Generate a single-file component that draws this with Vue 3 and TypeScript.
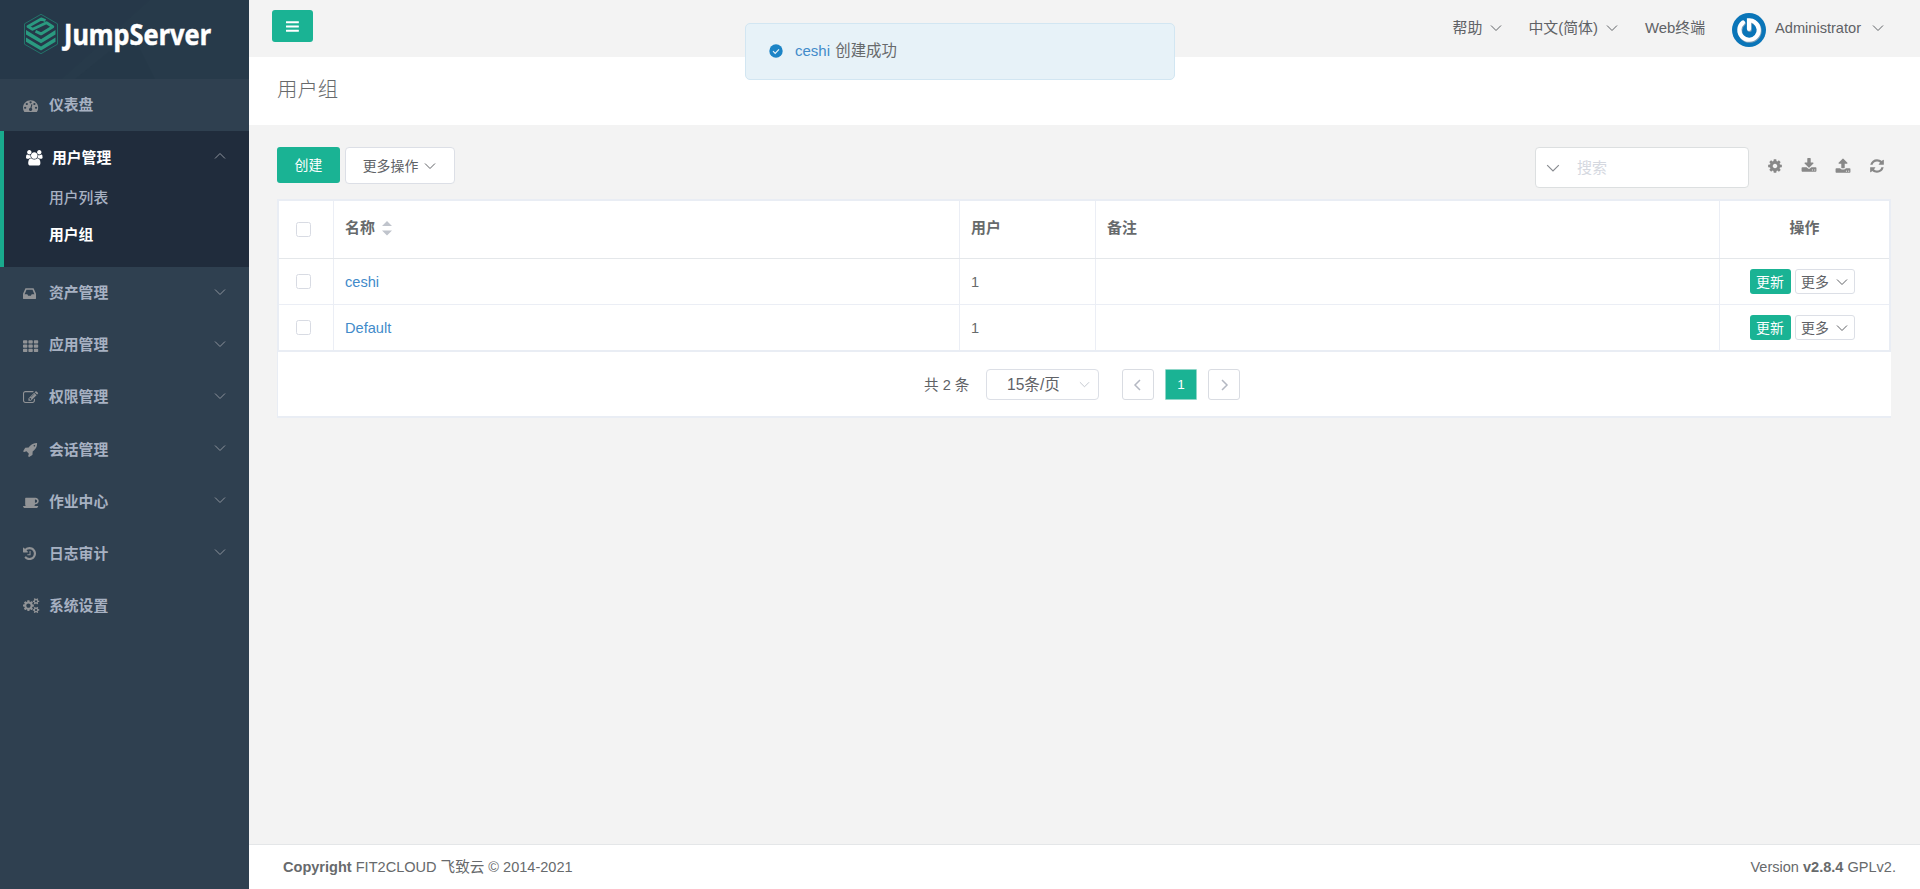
<script setup lang="ts">
import { h, type FunctionalComponent } from 'vue'

interface IconDef { w: number; d: string }
interface MenuItem { label: string; icon: string; expandable: boolean }
interface GroupRow { name: string; users: number; comment: string }

const icons: Record<string, IconDef> = {
  bars: { w: 1536, d: 'M1536 1344v128q0 26-19 45t-45 19h-1408q-26 0-45-19t-19-45v-128q0-26 19-45t45-19h1408q26 0 45 19t19 45zm0-512v128q0 26-19 45t-45 19h-1408q-26 0-45-19t-19-45v-128q0-26 19-45t45-19h1408q26 0 45 19t19 45zm0-512v128q0 26-19 45t-45 19h-1408q-26 0-45-19t-19-45v-128q0-26 19-45t45-19h1408q26 0 45 19t19 45z' },
  dashboard: { w: 1792, d: 'M384 1152q0-53-37.5-90.5t-90.5-37.5-90.5 37.5-37.5 90.5 37.5 90.5 90.5 37.5 90.5-37.5 37.5-90.5zm192-448q0-53-37.5-90.5t-90.5-37.5-90.5 37.5-37.5 90.5 37.5 90.5 90.5 37.5 90.5-37.5 37.5-90.5zm428 481l101-382q6-26-7.5-48.5t-38.5-29.5-48 6.5-30 39.5l-101 382q-60 5-107 43.5t-63 98.5q-20 77 20 146t117 89 146-20 89-117q16-60-6-117t-72-91zm660-33q0-53-37.5-90.5t-90.5-37.5-90.5 37.5-37.5 90.5 37.5 90.5 90.5 37.5 90.5-37.5 37.5-90.5zm-640-640q0-53-37.5-90.5t-90.5-37.5-90.5 37.5-37.5 90.5 37.5 90.5 90.5 37.5 90.5-37.5 37.5-90.5zm448 192q0-53-37.5-90.5t-90.5-37.5-90.5 37.5-37.5 90.5 37.5 90.5 90.5 37.5 90.5-37.5 37.5-90.5zm320 448q0 261-141 483-19 29-54 29h-1402q-35 0-54-29-141-221-141-483 0-182 71-348t191-286 286-191 348-71 348 71 286 191 191 286 71 348z' },
  users: { w: 1920, d: 'M593 896q-162 5-265 128h-134q-82 0-138-40.5t-56-118.5q0-353 124-353 6 0 43.5 21t97.5 42.5 119 21.5q67 0 133-23-5 37-5 66 0 139 81 256zm1071 637q0 120-73 189.5t-194 69.5h-874q-121 0-194-69.5t-73-189.5q0-53 3.5-103.5t14-109 26.5-108.5 43-97.5 62-81 85.5-53.5 111.5-20q10 0 43 21.5t73 48 107 48 135 21.5 135-21.5 107-48 73-48 43-21.5q61 0 111.5 20t85.5 53.5 62 81 43 97.5 26.5 108.5 14 109 3.5 103.5zm-1024-1277q0 106-75 181t-181 75-181-75-75-181 75-181 181-75 181 75 75 181zm704 384q0 159-112.5 271.5t-271.5 112.5-271.5-112.5-112.5-271.5 112.5-271.5 271.5-112.5 271.5 112.5 112.5 271.5zm576 225q0 78-56 118.5t-138 40.5h-134q-103-123-265-128 81-117 81-256 0-29-5-66 66 23 133 23 59 0 119-21.5t97.5-42.5 43.5-21q124 0 124 353zm-128-609q0 106-75 181t-181 75-181-75-75-181 75-181 181-75 181 75 75 181z' },
  inbox: { w: 1536, d: 'M1023 960h316q-1-3-2.5-8.5t-2.5-7.5l-212-496h-708l-212 496q-1 3-2.5 8.5t-2.5 7.5h316l95 192h320zm513 30v482q0 26-19 45t-45 19h-1408q-26 0-45-19t-19-45v-482q0-62 25-123l238-552q10-25 36.5-42t52.5-17h832q26 0 52.5 17t36.5 42l238 552q25 61 25 123z' },
  th: { w: 1792, d: 'M512 1376v192q0 40-28 68t-68 28h-320q-40 0-68-28t-28-68v-192q0-40 28-68t68-28h320q40 0 68 28t28 68zm0-512v192q0 40-28 68t-68 28h-320q-40 0-68-28t-28-68v-192q0-40 28-68t68-28h320q40 0 68 28t28 68zm640 512v192q0 40-28 68t-68 28h-320q-40 0-68-28t-28-68v-192q0-40 28-68t68-28h320q40 0 68 28t28 68zm-640-1024v192q0 40-28 68t-68 28h-320q-40 0-68-28t-28-68v-192q0-40 28-68t68-28h320q40 0 68 28t28 68zm640 512v192q0 40-28 68t-68 28h-320q-40 0-68-28t-28-68v-192q0-40 28-68t68-28h320q40 0 68 28t28 68zm640 512v192q0 40-28 68t-68 28h-320q-40 0-68-28t-28-68v-192q0-40 28-68t68-28h320q40 0 68 28t28 68zm-640-1024v192q0 40-28 68t-68 28h-320q-40 0-68-28t-28-68v-192q0-40 28-68t68-28h320q40 0 68 28t28 68zm640 512v192q0 40-28 68t-68 28h-320q-40 0-68-28t-28-68v-192q0-40 28-68t68-28h320q40 0 68 28t28 68zm0-512v192q0 40-28 68t-68 28h-320q-40 0-68-28t-28-68v-192q0-40 28-68t68-28h320q40 0 68 28t28 68z' },
  edit: { w: 1792, d: 'M888 1184l116-116-152-152-116 116v56h96v96h56zm440-720q-16-16-33 1l-350 350q-17 17-1 33t33-1l350-350q17-17 1-33zm80 594v190q0 119-84.5 203.5t-203.5 84.5h-832q-119 0-203.5-84.5t-84.5-203.5v-832q0-119 84.5-203.5t203.5-84.5h832q63 0 117 25 15 7 18 23 3 17-9 29l-49 49q-14 14-32 8-23-6-45-6h-832q-66 0-113 47t-47 113v832q0 66 47 113t113 47h832q66 0 113-47t47-113v-126q0-13 9-22l64-64q15-15 35-7t20 29zm-96-738l288 288-672 672h-288v-288zm444 132l-92 92-288-288 92-92q28-28 68-28t68 28l152 152q28 28 28 68t-28 68z' },
  rocket: { w: 1664, d: 'M1440 448q0-40-28-68t-68-28-68 28-28 68 28 68 68 28 68-28 28-68zm224-288q0 249-75.5 430.5t-253.5 360.5q-81 80-195 176l-20 379q-2 16-16 26l-384 224q-7 4-16 4-12 0-23-9l-64-64q-13-14-8-32l85-276-281-281-276 85q-3 1-9 1-14 0-23-9l-64-64q-17-19-5-39l224-384q10-14 26-16l379-20q96-114 176-195 188-187 358-258t431-71q14 0 24 9.5t10 22.5z' },
  coffee: { w: 1920, d: 'M1664 832q0-80-56-136t-136-56h-64v384h64q80 0 136-56t56-136zm-1664 576h1792q0 106-75 181t-181 75h-1280q-106 0-181-75t-75-181zm1856-576q0 159-112.5 271.5t-271.5 112.5h-64v32q0 92-66 158t-158 66h-704q-92 0-158-66t-66-158v-736q0-26 19-45t45-19h1152q159 0 271.5 112.5t112.5 271.5z' },
  history: { w: 1536, d: 'M1536 896q0 156-61 298t-164 245-245 164-298 61q-172 0-327-72.5t-264-204.5q-7-10-6.5-22.5t8.5-20.5l137-138q10-9 25-9 16 2 23 12 73 95 179 147t225 52q104 0 198.5-40.5t163.5-109.5 109.5-163.5 40.5-198.5-40.5-198.5-109.5-163.5-163.5-109.5-198.5-40.5q-98 0-188 35.5t-160 101.5l137 138q31 30 14 69-17 40-59 40h-448q-26 0-45-19t-19-45v-448q0-42 40-59 39-17 69 14l130 129q107-101 244.5-156.5t284.5-55.5q156 0 298 61t245 164 164 245 61 298zm-640-288v448q0 14-9 23t-23 9h-320q-14 0-23-9t-9-23v-64q0-14 9-23t23-9h224v-352q0-14 9-23t23-9h64q14 0 23 9t9 23z' },
  cogs: { w: 1920, d: 'M896 896q0-106-75-181t-181-75-181 75-75 181 75 181 181 75 181-75 75-181zm768 512q0-52-38-90t-90-38-90 38-38 90q0 53 37.5 90.5t90.5 37.5 90.5-37.5 37.5-90.5zm0-1024q0-52-38-90t-90-38-90 38-38 90q0 53 37.5 90.5t90.5 37.5 90.5-37.5 37.5-90.5zm-384 421v185q0 10-7 19.5t-16 10.5l-155 24q-11 35-32 76 34 48 90 115 7 11 7 20 0 12-7 19-23 30-82.5 89.5t-78.5 59.5q-11 0-21-7l-115-90q-37 19-77 31-11 108-23 155-7 24-30 24h-186q-11 0-20-7.5t-10-17.5l-23-153q-34-10-75-31l-118 89q-7 7-20 7-11 0-21-8-144-133-144-160 0-9 7-19 10-14 41-53t47-61q-23-44-35-82l-152-24q-10-1-17-9.5t-7-19.5v-185q0-10 7-19.5t16-10.5l155-24q11-35 32-76-34-48-90-115-7-11-7-20 0-12 7-20 22-30 82-89t79-59q11 0 21 7l115 90q34-18 77-32 11-108 23-154 7-24 30-24h186q11 0 20 7.5t10 17.5l23 153q34 10 75 31l118-89q8-7 20-7 11 0 21 8 144 133 144 160 0 8-7 19-12 16-42 54t-45 60q23 48 34 82l152 23q10 2 17 10.5t7 19.5zm640 533v140q0 16-149 31-12 27-30 52 51 113 51 138 0 4-4 7-122 71-124 71-8 0-46-47t-52-68q-20 2-30 2t-30-2q-14 21-52 68t-46 47q-2 0-124-71-4-3-4-7 0-25 51-138-18-25-30-52-149-15-149-31v-140q0-16 149-31 13-29 30-52-51-113-51-138 0-4 4-7 4-2 35-20t59-34 30-16q8 0 46 46.5t52 67.5q20-2 30-2t30 2q51-71 92-112l6-2q4 0 124 70 4 3 4 7 0 25-51 138 17 23 30 52 149 15 149 31zm0-1024v140q0 16-149 31-12 27-30 52 51 113 51 138 0 4-4 7-122 71-124 71-8 0-46-47t-52-68q-20 2-30 2t-30-2q-14 21-52 68t-46 47q-2 0-124-71-4-3-4-7 0-25 51-138-18-25-30-52-149-15-149-31v-140q0-16 149-31 13-29 30-52-51-113-51-138 0-4 4-7 4-2 35-20t59-34 30-16q8 0 46 46.5t52 67.5q20-2 30-2t30 2q51-71 92-112l6-2q4 0 124 70 4 3 4 7 0 25-51 138 17 23 30 52 149 15 149 31z' },
  cog: { w: 1792, d: 'M1152 896q0-106-75-181t-181-75-181 75-75 181 75 181 181 75 181-75 75-181zm512-109v222q0 12-8 23t-20 13l-185 28q-19 54-39 91 35 50 107 138 10 12 10 25t-9 23q-27 37-99 108t-94 71q-12 0-26-9l-138-108q-44 23-91 38-16 136-29 186-7 28-36 28h-222q-14 0-24.5-8.5t-11.5-21.5l-28-184q-49-16-90-37l-141 107q-10 9-25 9-14 0-25-11-126-114-165-168-7-10-7-23 0-12 8-23 15-21 51-66.5t54-70.5q-27-50-41-99l-183-27q-13-2-21-12.5t-8-23.5v-222q0-12 8-23t19-13l186-28q14-46 39-92-40-57-107-138-10-12-10-24 0-10 9-23 26-36 98.5-107.5t94.5-71.5q13 0 26 10l138 107q44-23 91-38 16-136 29-186 7-28 36-28h222q14 0 24.5 8.5t11.5 21.5l28 184q49 16 90 37l142-107q9-9 24-9 13 0 25 10 129 119 165 170 7 8 7 22 0 12-8 23-15 21-51 66.5t-54 70.5q26 50 41 98l183 28q13 2 21 12.5t8 23.5z' },
  download: { w: 1792, d: 'M1344 1344q0-26-19-45t-45-19-45 19-19 45 19 45 45 19 45-19 19-45zm256 0q0-26-19-45t-45-19-45 19-19 45 19 45 45 19 45-19 19-45zm128-224v320q0 40-28 68t-68 28h-1472q-40 0-68-28t-28-68v-320q0-40 28-68t68-28h465l135 136q58 56 136 56t136-56l136-136h464q40 0 68 28t28 68zm-325-569q17 41-14 70l-448 448q-18 19-45 19t-45-19l-448-448q-31-29-14-70 17-39 59-39h256v-448q0-26 19-45t45-19h256q26 0 45 19t19 45v448h256q42 0 59 39z' },
  upload: { w: 1792, d: 'M1344 1472q0-26-19-45t-45-19-45 19-19 45 19 45 45 19 45-19 19-45zm256 0q0-26-19-45t-45-19-45 19-19 45 19 45 45 19 45-19 19-45zm128-224v320q0 40-28 68t-68 28h-1472q-40 0-68-28t-28-68v-320q0-40 28-68t68-28h427q21 56 70.5 92t110.5 36h256q61 0 110.5-36t70.5-92h427q40 0 68 28t28 68zm-325-648q-17 40-59 40h-256v448q0 26-19 45t-45 19h-256q-26 0-45-19t-19-45v-448h-256q-42 0-59-40-17-39 14-69l448-448q18-19 45-19t45 19l448 448q31 30 14 69z' },
  refresh: { w: 1792, d: 'M1639 1056q0 5-1 7-64 268-268 434.5t-478 166.5q-146 0-282.5-55t-243.5-157l-129 129q-19 19-45 19t-45-19-19-45v-448q0-26 19-45t45-19h448q26 0 45 19t19 45-19 45l-137 137q71 66 161 102t187 36q134 0 250-65t186-179q11-17 53-117 8-23 30-23h192q13 0 22.5 9.5t9.5 22.5zm25-800v448q0 26-19 45t-45 19h-448q-26 0-45-19t-19-45 19-45l138-138q-148-137-349-137-134 0-250 65t-186 179q-11 17-53 117-8 23-30 23h-199q-13 0-22.5-9.5t-9.5-22.5v-7q65-268 270-434.5t480-166.5q146 0 284 55.5t245 156.5l130-129q19-19 45-19t45 19 19 45z' },
}

const FaIcon: FunctionalComponent<{ name: string; size: number }> = (props) => {
  const def = icons[props.name]
  return h('svg', {
    viewBox: `0 0 ${def.w} 1792`,
    width: (def.w / 1792) * props.size,
    height: props.size,
    fill: 'currentColor',
    overflow: 'visible',
  }, [h('path', { d: def.d })])
}
FaIcon.props = ['name', 'size']

const Chevron: FunctionalComponent<{ dir?: string; size?: number }> = (props) => {
  const shapes: Record<string, string> = {
    down: 'M1 3.5 6 8.5 11 3.5',
    up: 'M1 8.5 6 3.5 11 8.5',
    left: 'M8 1 3 6 8 11',
    right: 'M4 1 9 6 4 11',
  }
  const size = props.size ?? 12
  return h('svg', { viewBox: '0 0 12 12', width: size, height: size, fill: 'none', stroke: 'currentColor' },
    [h('path', { d: shapes[props.dir ?? 'down'] })])
}
Chevron.props = ['dir', 'size']

const submenu = [
  { label: '用户列表', active: false },
  { label: '用户组', active: true },
]
const menu: MenuItem[] = [
  { label: '资产管理', icon: 'inbox', expandable: true },
  { label: '应用管理', icon: 'th', expandable: true },
  { label: '权限管理', icon: 'edit', expandable: true },
  { label: '会话管理', icon: 'rocket', expandable: true },
  { label: '作业中心', icon: 'coffee', expandable: true },
  { label: '日志审计', icon: 'history', expandable: true },
  { label: '系统设置', icon: 'cogs', expandable: false },
]
const tools = ['cog', 'download', 'upload', 'refresh']
const rows: GroupRow[] = [
  { name: 'ceshi', users: 1, comment: '' },
  { name: 'Default', users: 1, comment: '' },
]
</script>

<template>
  <div class="page">
    <aside class="sidebar">
      <div class="brand">
        <svg class="brand-svg" width="249" height="79" viewBox="0 0 249 79">
          <path d="M0 0H150L62 79H0Z" fill="#20303f" opacity=".12" />
          <path d="M132 33 155 79H75Z" fill="#1c2f3e" opacity=".16" />
          <path d="M41 14.3 57.500 23.800V44.200L41 53.700 24.500 44.200V23.800Z" fill="none" stroke="#23796d" stroke-width=".9" />
          <path d="M45.500 20.600 41.200 18.900 28 26.600 32.500 29.200 46.500 22.800 52.800 26.800 41 33.900 35.500 31.200" fill="none" stroke="#2a9a80" stroke-width="2.900" stroke-linejoin="round" />
          <g fill="#2a9a80">
            <path d="M26 30 41 39.200 55.500 30V34.500L41 43.300 26 34.500Z" />
            <path d="M26 37.500 41 46.600 55.500 37.500V41.700L41 50.600 26 41.700Z" />
          </g>
          <text x="64" y="44.700" class="wordmark" textLength="147" lengthAdjust="spacingAndGlyphs">JumpServer</text>
        </svg>
      </div>
      <nav>
        <a class="item"><span class="ico dash"><FaIcon name="dashboard" :size="15.200" /></span><span class="lbl">仪表盘</span></a>
        <div class="group">
          <a class="item open"><span class="ico"><FaIcon name="users" :size="15.500" /></span><span class="lbl">用户管理</span><Chevron class="arrow" dir="up" /></a>
          <a v-for="s in submenu" :key="s.label" class="sub" :class="{ active: s.active }">{{ s.label }}</a>
        </div>
        <a v-for="m in menu" :key="m.label" class="item">
          <span class="ico"><FaIcon :name="m.icon" :size="15.200" /></span>
          <span class="lbl">{{ m.label }}</span>
          <Chevron v-if="m.expandable" class="arrow" />
        </a>
      </nav>
    </aside>

    <div class="main">
      <header class="topbar">
        <button class="toggle"><FaIcon name="bars" :size="15" /></button>
        <div class="top-links">
          <span class="link help">帮助<Chevron /></span>
          <span class="link lang">中文(简体)<Chevron /></span>
          <span class="link web">Web终端</span>
          <svg class="avatar" width="34" height="34" viewBox="0 0 34 34">
            <circle cx="17" cy="17" r="17" fill="#0a75b8" />
            <g fill="none" stroke-linecap="round">
              <path d="M11 9.500A9.700 9.700 0 1 0 22.800 9.200 9 9 0 0 0 17 7.300V16" stroke="#7d9fb8" stroke-width="4.500" transform="translate(.6 .8)" />
              <path d="M11 9.500A9.700 9.700 0 1 0 22.800 9.200 9 9 0 0 0 17 7.300V16" stroke="#fff" stroke-width="4.200" />
            </g>
          </svg>
          <span class="link admin">Administrator<Chevron /></span>
        </div>
      </header>
      <div class="title-band"><h2>用户组</h2></div>

      <section class="content">
        <div class="toolbar">
          <button class="btn primary">创建</button>
          <button class="btn plain">更多操作<Chevron /></button>
          <div class="search"><Chevron :size="14" /><span>搜索</span></div>
          <div class="tools"><FaIcon v-for="t in tools" :key="t" :name="t" :size="16" /></div>
        </div>

        <div class="card">
          <div class="table">
            <div class="row head">
              <div class="cell check"><i class="box" /></div>
              <div class="cell">名称
                <svg class="sort" width="10" height="16" viewBox="0 0 10 16"><path d="M0 6 5 1 10 6ZM0 10.500 5 15.500 10 10.500Z" fill="#c0c4cc" /></svg>
              </div>
              <div class="cell">用户</div>
              <div class="cell">备注</div>
              <div class="cell act">操作</div>
            </div>
            <div v-for="r in rows" :key="r.name" class="row">
              <div class="cell check"><i class="box" /></div>
              <div class="cell"><a class="name">{{ r.name }}</a></div>
              <div class="cell">{{ r.users }}</div>
              <div class="cell">{{ r.comment }}</div>
              <div class="cell act">
                <button class="mini primary">更新</button>
                <button class="mini plain">更多<Chevron /></button>
              </div>
            </div>
          </div>
          <div class="pager">
            <span class="total">共 2 条</span>
            <span class="select"><span>15条/页</span><Chevron :size="11" /></span>
            <span class="pg"><Chevron dir="left" /></span>
            <span class="pg current">1</span>
            <span class="pg"><Chevron dir="right" /></span>
          </div>
        </div>
      </section>

      <footer>
        <span><b>Copyright</b> FIT2CLOUD 飞致云 © 2014-2021</span>
        <span>Version <b>v2.8.4</b> GPLv2.</span>
      </footer>
    </div>

    <div class="toast">
      <svg width="14" height="14" viewBox="0 0 14 14"><circle cx="7" cy="7" r="6.700" fill="#1c84c6" /><path d="M4 7.200 6.200 9.400 10 5.400" fill="none" stroke="#e7f2f8" stroke-width="1.200" /></svg>
      <span class="msg"><a class="name">ceshi</a> 创建成功</span>
    </div>
  </div>
</template>

<style>
body { margin: 0; }
</style>

<style scoped>
* { box-sizing: border-box; }
.page {
  position: relative;
  display: flex;
  width: 1920px;
  height: 889px;
  overflow: hidden;
  background: #f3f3f3;
  color: #676a6c;
  font: 14.6px/20px "Liberation Sans", "Noto Sans CJK SC", sans-serif;
}
svg { display: block; flex: none; }
button { font: inherit; padding: 0; margin: 0; display: flex; align-items: center; justify-content: center; }

.sidebar { width: 249px; flex: none; background: #2f4050; font-size: 14.8px; }
.brand { height: 79px; background: #273a4a; }
.wordmark { font: 700 29px "Noto Sans", "Open Sans", sans-serif; fill: #fff; stroke: #fff; stroke-width: .5px; }
.item { display: flex; align-items: center; height: 52.15px; padding: 0 23px; color: #a7b1c2; font-weight: 600; }
.ico { width: 26px; color: #919396; padding-top: 0; }
.ico.dash { padding-top: 2px; }
.lbl { flex: 1; }
.arrow { color: #8d939c; margin-top: -3px; }
.group { height: 136px; background: #202c3c; border-left: 4px solid #19aa8d; }
.open { color: #fff; padding-left: 22px; }
.open .ico { color: #fff; padding-top: 1px; width: 26px; }
.open .lbl { padding-top: 1px; }
.sub { display: flex; align-items: center; height: 37px; padding-left: 45px; color: #a7b1c2; font-weight: 500; margin-top: -4px; margin-bottom: 4px; }
.sub.active { color: #fff; font-weight: 700; }

.main { flex: 1; display: flex; flex-direction: column; }
.topbar { height: 57px; flex: none; display: flex; justify-content: space-between; align-items: flex-start; padding: 10px 36px 0 23px; }
.toggle { width: 41px; height: 32px; background: #1ab394; color: #fff; border: 0; border-radius: 3px; }
.top-links { display: flex; align-items: center; height: 36px; }
.link { display: flex; align-items: center; gap: 8px; height: 34px; padding-bottom: 1px; color: #5f6266; font-size: 14.9px; }
.lang { margin-left: 26px; }
.web { margin-left: 27px; padding-bottom: 0; }
.avatar { margin: 3px 9px 0 27px; }
.admin { gap: 11px; font-size: 14.6px; }
.title-band { height: 68px; flex: none; background: #fff; padding: 18px 0 0 28px; }
h2 { margin: 0; font-size: 20.4px; line-height: 30px; font-weight: 300; color: #676a6c; }

.content { flex: 1; padding: 22px 29px 0 28px; }
.toolbar { display: flex; align-items: flex-start; height: 52px; }
.btn { height: 36px; border-radius: 3px; font-size: 13.9px; }
.primary { background: #1ab394; color: #fff; border: 0; }
.plain { background: #fff; color: #606266; border: 1px solid #dcdfe6; }
.btn.primary { width: 63px; }
.btn.plain { width: 110px; height: 37px; margin-left: 5px; gap: 6px; border-radius: 4px; padding-right: 1px; }
.search { margin-left: auto; width: 214px; height: 41px; display: flex; align-items: center; gap: 17px; padding-left: 10px; background: #fff; border: 1px solid #dcdfe0; border-radius: 4px; color: #888b90; font-size: 15px; }
.search span { color: #d5d8df; }
.tools { display: flex; gap: 18px; margin: 11px 6px 0 18px; color: #888; }

.card { background: #fff; height: 219px; border-bottom: 2px solid #e9edf4; box-shadow: inset 1px 0 #e9edf4; }
.table { border: 2px solid #e9edf4; height: 153px; }
.row { display: grid; grid-template-columns: 55px 626px 136px 624px 1fr; height: 46px; border-bottom: 1px solid #ebeef5; }
.row.head { height: 58px; font-weight: 700; font-size: 14.9px; border-bottom-color: #e4e7ea; }
.row:last-child { height: 45px; border-bottom: 0; }
.cell { display: flex; align-items: center; padding-left: 11px; border-right: 1px solid #ebeef5; }
.head .cell { padding-bottom: 3px; }
.cell:last-child { border-right: 0; }
.check { padding: 0 0 0 17px; }
.head .check { padding-bottom: 0; }
.box { width: 15px; height: 15px; border: 1px solid #d8dbe3; border-radius: 2.500px; }
.sort { margin-left: 7px; }
.act { justify-content: center; padding-left: 0; gap: 4px; }
.row:not(.head) .act { padding-right: 5px; }
.name { color: #428bca; }
.mini { height: 25px; border-radius: 3px; font-size: 13.9px; }
.mini.primary { width: 41px; }
.mini.plain { width: 60px; gap: 7px; }

.pager { display: flex; align-items: center; padding: 17px 0 0 647px; height: 48px; }
.total { width: 62px; color: #606266; }
.select { width: 113px; height: 31px; display: flex; align-items: center; justify-content: space-between; padding: 0 8px 0 20px; border: 1px solid #dcdfe6; border-radius: 4px; margin-right: 23px; color: #c0c4cc; font-size: 15.6px; }
.select span { color: #606266; }
.pg { width: 32px; height: 31px; margin-right: 11px; display: flex; align-items: center; justify-content: center; border: 1px solid #d9dce2; border-radius: 3px; color: #b4b8c2; font-size: 13.500px; }
.pg svg { stroke-width: 1.500; }
.pg.current { background: #1ab394; color: #fff; border-color: #8fd6c8; border-radius: 1px; }

footer { height: 45px; flex: none; display: flex; justify-content: space-between; padding: 12px 24px 0 34px; background: #fff; border-top: 1px solid #e4e6e8; font-size: 14.55px; }

.toast { position: absolute; left: 745px; top: 23px; width: 430px; height: 57px; display: flex; align-items: center; gap: 12px; padding: 0 0 1px 23px; background: #e7f2f8; border: 1px solid #d2e6f2; border-radius: 5px; font-size: 15.4px; }
.msg { word-spacing: 1px; }
.msg .name { font-size: 15px; }
</style>
